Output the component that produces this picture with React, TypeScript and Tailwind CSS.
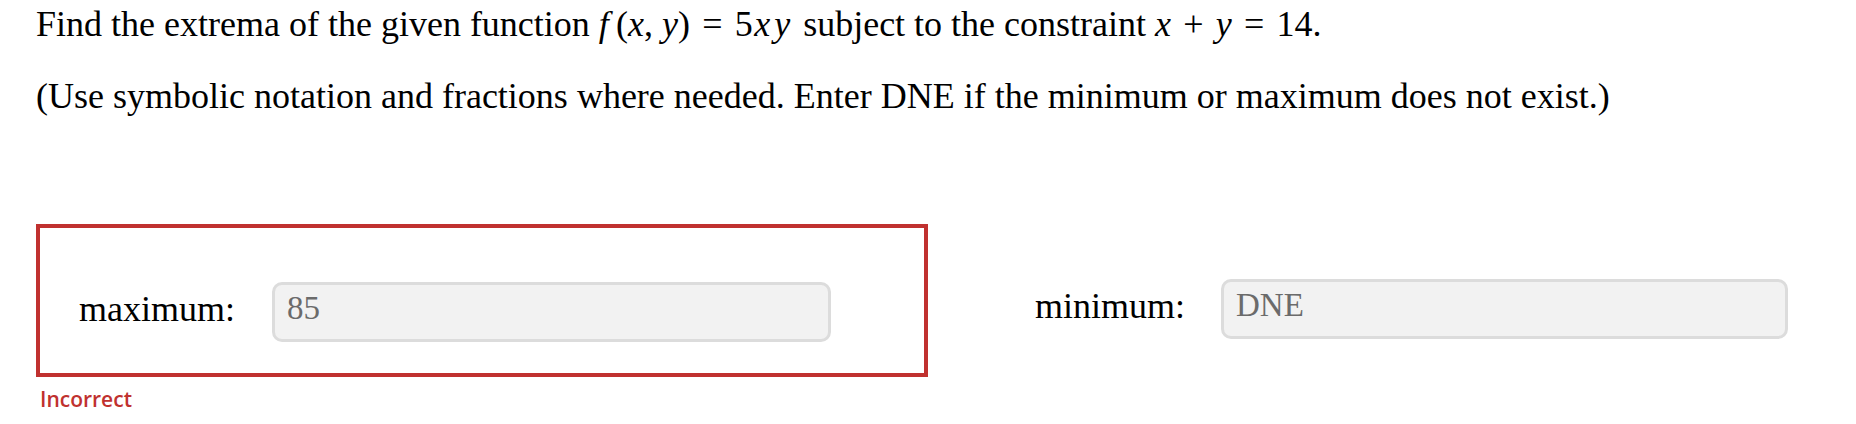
import React from 'react'

const serif = { fontFamily: '"Liberation Serif", "Times New Roman", serif' }

const Mi = ({ children }: { children: React.ReactNode }) => (
    <span className="italic">{children}</span>
)

const Op = ({ children }: { children: React.ReactNode }) => (
    <span className="mx-[0.34em]">{children}</span>
)

interface FieldProps {
    value: string;
}
const AnswerField = ({ value }: FieldProps) => {
    return (
        <div className="flex h-[60px] items-center rounded-[10px] border-[3px] border-[#dcdcdc] bg-[#f2f2f2] pb-[6px] pl-[12px] text-[33px] text-[#6b6b6b]">
            {value}
        </div>
    )
}

const App = () => {
    return (
        <div className="h-[424px] w-[1856px] bg-white pl-[36px] text-black" style={serif}>
            <p className="pt-[4px] text-[36px] leading-[40px]">
                Find the extrema of the given function{' '}
                <Mi>f</Mi>
                <span className="ml-[0.2em]">(</span>
                <Mi>x</Mi>,<span className="ml-[0.25em]"></span>
                <Mi>y</Mi>)<Op>=</Op>
                5<span className="ml-[0.04em] italic tracking-[0.11em]">xy</span> subject to the constraint{' '}
                <Mi>x</Mi>
                <Op>+</Op>
                <Mi>y</Mi>
                <Op>=</Op>14.
            </p>
            <p className="mt-[32px] text-[36px] leading-[40px]">
                (Use symbolic notation and fractions where needed. Enter DNE if the minimum or maximum does not exist.)
            </p>

            <div className="mt-[108px] flex items-start">
                <div>
                    <div className="flex h-[153px] w-[892px] items-start border-4 border-[#c0312f] pl-[39px] pt-[54px]">
                        <div className="flex items-center gap-[37px]">
                            <span className="pb-[6px] text-[36px] leading-[36px]">maximum:</span>
                            <div className="w-[559px]">
                                <AnswerField value="85" />
                            </div>
                        </div>
                    </div>
                    <div
                        className="mt-[8px] pl-[4px] text-[21px] font-semibold leading-[28px] text-[#c0312f]"
                        style={{ fontFamily: '"Open Sans", sans-serif' }}
                    >
                        Incorrect
                    </div>
                </div>

                <div className="ml-[107px] mt-[55px] flex items-center gap-[36px]">
                    <span className="pb-[6px] text-[36px] leading-[36px]">minimum:</span>
                    <div className="w-[567px]">
                        <AnswerField value="DNE" />
                    </div>
                </div>
            </div>
        </div>
    )
}

export default App
